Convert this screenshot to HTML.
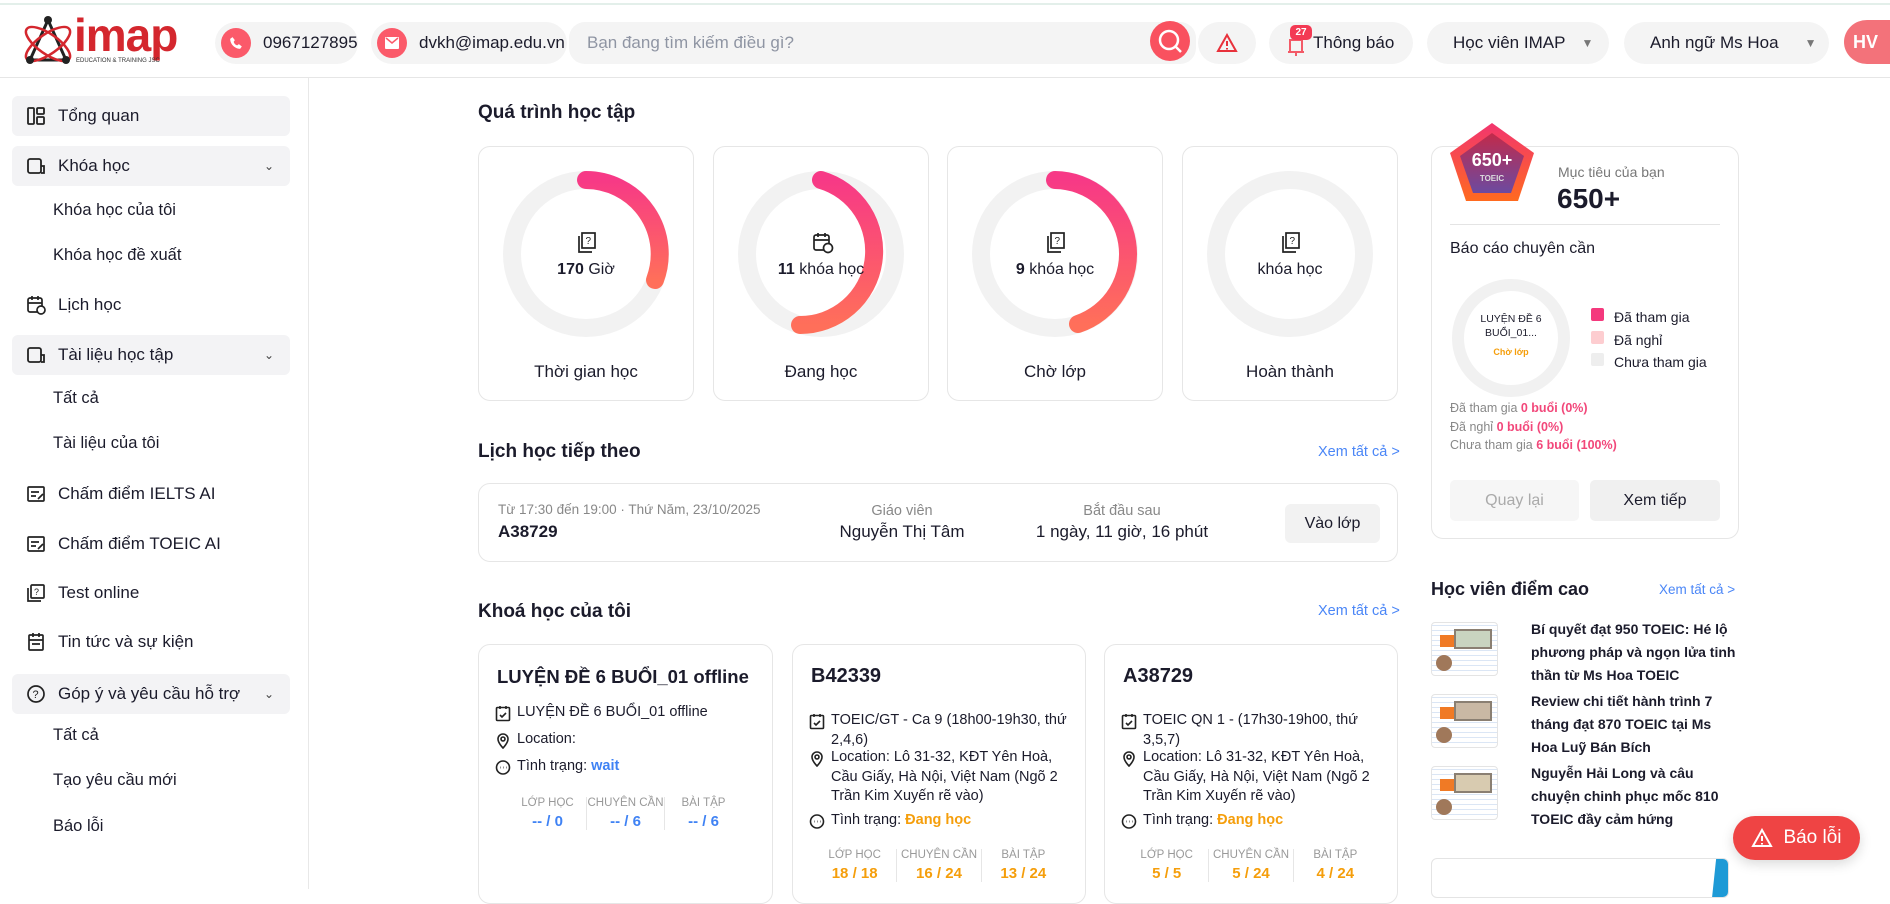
<!DOCTYPE html>
<html><head><meta charset="utf-8"><style>
*{box-sizing:border-box;margin:0;padding:0}
body{width:1890px;height:889px;overflow:hidden;background:#fff;font-family:"Liberation Sans",sans-serif;color:#1b1b2b;position:relative}
.a{position:absolute}
.pill{position:absolute;top:22px;height:42px;border-radius:21px;background:#f4f4f4;display:flex;align-items:center;font-size:17px;color:#1b1b2b}
.ic{width:30px;height:30px;border-radius:50%;background:#fb5a6a;display:flex;align-items:center;justify-content:center;margin:0 12px 0 6px}
.side{position:absolute;left:0;top:78px;width:309px;height:811px;border-right:1px solid #e8e8e8}
.si{position:absolute;left:12px;width:278px;height:40px;display:flex;align-items:center;font-size:17px;border-radius:6px}
.si.bx{background:#f3f3f5}
.si svg{margin:0 12px 0 14px}
.sub{position:absolute;left:53px;font-size:16.5px}
.chev{position:absolute;right:16px;top:13px;font-size:12px;color:#444}
h3{position:absolute;font-size:19px;font-weight:bold}
.card{position:absolute;border:1px solid #e6e6e6;border-radius:12px;background:#fff}
.more{position:absolute;color:#4a86f7;font-size:14.5px}
.lbl{position:absolute;width:100%;text-align:center;font-size:17px}
.row{position:absolute;left:16px;right:12px;display:flex;font-size:14.5px;line-height:19.5px}
.row svg{flex:none;margin-right:6px;margin-top:2px}
.st{position:absolute;display:flex;left:14px;right:14px}
.st div{flex:1;text-align:center;font-size:11.5px;color:#999;border-right:1px solid #e6e6e6;white-space:nowrap}
.st div:last-child{border:none}
.st b{display:block;font-size:15px;margin-top:4px}
.nw{position:absolute;left:1531px;font-size:14px;font-weight:bold;line-height:23px;width:205px}
.th{position:absolute;left:1431px;width:67px;height:54px;border:1px solid #e4e4e4;border-radius:4px;background:repeating-linear-gradient(0deg,#fff 0 4px,#dbe6f5 4px 5px)}
.th i{position:absolute;right:5px;top:6px;width:38px;height:20px;background:#c9d4c0;border:2px solid #8a7f72}
.th u{position:absolute;left:4px;bottom:4px;width:16px;height:16px;border-radius:50%;background:#a0785a}
.th s{position:absolute;left:8px;top:12px;width:14px;height:12px;background:#f07a25}
</style></head><body>
<div class="a" style="left:0;top:3px;width:1890px;height:2px;background:#e3efea"></div>
<div class="a" style="left:18px;top:14px;width:180px;height:56px">
<svg width="60" height="56" viewBox="0 0 60 56"><g fill="none" stroke="#222" stroke-width="3"><path d="M30 6 L12 46 L48 46 Z"/></g><g fill="none" stroke="#d4272e" stroke-width="2.5"><ellipse cx="30" cy="30" rx="26" ry="10" transform="rotate(35 30 30)"/><ellipse cx="30" cy="30" rx="26" ry="10" transform="rotate(-35 30 30)"/></g><circle cx="30" cy="6" r="4" fill="#222"/><circle cx="12" cy="46" r="4" fill="#222"/><circle cx="48" cy="46" r="4" fill="#222"/></svg>
<span class="a" style="left:56px;top:-6px;font-size:46px;font-weight:bold;color:#d4272e;letter-spacing:-1px">imap</span>
<span class="a" style="left:58px;top:44px;font-size:6px;color:#333">EDUCATION &amp; TRAINING JSC</span>
</div>
<div class="pill" style="left:215px;width:143px"><div class="ic"><svg width="14" height="14" viewBox="0 0 24 24"><path d="M6 2l4 5-2 3c1 3 3 5 6 6l3-2 5 4-3 4C10 22 2 14 2 5z" fill="#fff"/></svg></div>0967127895</div>
<div class="pill" style="left:371px;width:196px"><div class="ic"><svg width="14" height="12" viewBox="0 0 14 12"><rect x="0" y="0" width="14" height="12" rx="1" fill="#fff"/><path d="M1 1l6 5 6-5" stroke="#fb5a6a" stroke-width="1.5" fill="none"/></svg></div>dvkh@imap.edu.vn</div>
<div class="pill" style="left:569px;width:627px;color:#8f95a3;padding-left:18px;border-radius:16px">Bạn đang tìm kiếm điều gì?</div>
<div class="a" style="left:1150px;top:21px;width:40px;height:40px;border-radius:50%;background:#f9515f"><svg width="40" height="40"><circle cx="19" cy="19" r="9" stroke="#fff" stroke-width="2.5" fill="none"/><path d="M26 26l5 5" stroke="#fff" stroke-width="2.5"/></svg></div>
<div class="pill" style="left:1198px;width:58px;justify-content:center"><svg width="22" height="20" viewBox="0 0 22 20"><path d="M11 2L20 18H2Z" fill="none" stroke="#e8313b" stroke-width="2"/><path d="M11 8v5M11 15v1.5" stroke="#e8313b" stroke-width="2"/></svg></div>
<div class="pill" style="left:1269px;width:144px;padding-left:44px">Thông báo</div>
<svg class="a" style="left:1285px;top:32px" width="24" height="28"><path d="M5 8h12v12H5z M3 20h16M11 20v4" stroke="#f35a67" stroke-width="2" fill="none"/></svg>
<div class="a" style="left:1290px;top:25px;width:22px;height:15px;border-radius:5px;background:#f33a54;color:#fff;font-size:10px;font-weight:bold;text-align:center;line-height:15px">27</div>
<div class="pill" style="left:1427px;width:182px;padding-left:26px">Học viên IMAP<span style="margin-left:16px;color:#777;font-size:12px">▼</span></div>
<div class="pill" style="left:1624px;width:205px;padding-left:26px">Anh ngữ Ms Hoa<span style="margin-left:26px;color:#777;font-size:12px">▼</span></div>
<div class="a" style="left:1844px;top:20px;width:46px;height:44px;border-radius:50% 0 0 50%;background:#f3727a;color:#fff;font-weight:bold;font-size:18px;line-height:44px;padding-left:9px">HV</div>
<div class="a" style="left:0;top:77px;width:1890px;height:1px;background:#e6e6e6"></div>
<div class="side"></div>
<div class="si bx" style="top:96px"><svg width="20" height="20" viewBox="0 0 20 20" fill="none" stroke="#222" stroke-width="1.8"><rect x="2" y="2" width="6" height="16" rx="1"/><rect x="11" y="2" width="7" height="6" rx="1"/><rect x="11" y="11" width="7" height="7" rx="1"/></svg>Tổng quan</div>
<div class="si bx" style="top:146px"><svg width="20" height="20" viewBox="0 0 20 20" fill="none" stroke="#222" stroke-width="1.8"><rect x="2" y="3" width="13" height="14" rx="2"/><path d="M15 10h3v7h-3"/></svg>Khóa học<span class="chev">⌄</span></div>
<div class="sub" style="top:201px">Khóa học của tôi</div>
<div class="sub" style="top:246px">Khóa học đề xuất</div>
<div class="si" style="top:285px"><svg width="20" height="20" viewBox="0 0 20 20" fill="none" stroke="#222" stroke-width="1.7"><rect x="2" y="3" width="14" height="14" rx="2"/><path d="M2 8h14M6 1v4M12 1v4"/><circle cx="15" cy="15" r="4" fill="#fff"/></svg>Lịch học</div>
<div class="si bx" style="top:335px"><svg width="20" height="20" viewBox="0 0 20 20" fill="none" stroke="#222" stroke-width="1.8"><rect x="2" y="3" width="13" height="14" rx="2"/><path d="M15 10h3v7h-3"/></svg>Tài liệu học tập<span class="chev">⌄</span></div>
<div class="sub" style="top:389px">Tất cả</div>
<div class="sub" style="top:434px">Tài liệu của tôi</div>
<div class="si" style="top:474px"><svg width="20" height="20" viewBox="0 0 20 20" fill="none" stroke="#222" stroke-width="1.7"><rect x="2" y="3" width="16" height="14" rx="1"/><path d="M5 8h8M5 12h5M12 15l5-5"/></svg>Chấm điểm IELTS AI</div>
<div class="si" style="top:524px"><svg width="20" height="20" viewBox="0 0 20 20" fill="none" stroke="#222" stroke-width="1.7"><rect x="2" y="3" width="16" height="14" rx="1"/><path d="M5 8h8M5 12h5M12 15l5-5"/></svg>Chấm điểm TOEIC AI</div>
<div class="si" style="top:573px"><svg width="20" height="20" viewBox="0 0 20 20" fill="none" stroke="#222" stroke-width="1.7"><rect x="5" y="2" width="13" height="13" rx="1"/><path d="M2 5v13h13"/><text x="8" y="12" font-size="9" fill="#222" stroke="none">?</text></svg>Test online</div>
<div class="si" style="top:622px"><svg width="20" height="20" viewBox="0 0 20 20" fill="none" stroke="#222" stroke-width="1.7"><rect x="3" y="3" width="14" height="15" rx="1"/><path d="M3 8h14M7 1v4M13 1v4M6 12h8"/></svg>Tin tức và sự kiện</div>
<div class="si bx" style="top:674px"><svg width="20" height="20" viewBox="0 0 20 20" fill="none" stroke="#222" stroke-width="1.7"><circle cx="10" cy="10" r="8"/><text x="6.5" y="14" font-size="11" fill="#222" stroke="none">?</text></svg>Góp ý và yêu cầu hỗ trợ<span class="chev">⌄</span></div>
<div class="sub" style="top:726px">Tất cả</div>
<div class="sub" style="top:771px">Tạo yêu cầu mới</div>
<div class="sub" style="top:817px">Báo lỗi</div>
<h3 style="left:478px;top:102px">Quá trình học tập</h3>
<svg class="a" style="left:0;top:0" width="1420" height="420">
<defs><linearGradient id="g" x1="0" y1="0" x2="0" y2="1"><stop offset="0" stop-color="#f73986"/><stop offset="1" stop-color="#ff6f5a"/></linearGradient></defs>
<g fill="none" stroke-width="18">
<circle cx="586" cy="254" r="74" stroke="#f2f2f2"/><circle cx="821" cy="254" r="74" stroke="#f2f2f2"/><circle cx="1055" cy="254" r="74" stroke="#f2f2f2"/><circle cx="1290" cy="254" r="74" stroke="#f2f2f2"/>
<path d="M586 180 A74 74 0 0 1 655 280" stroke="url(#g)" stroke-linecap="round"/>
<path d="M821 180 A74 74 0 0 1 800 325" stroke="url(#g)" stroke-linecap="round"/>
<path d="M1055 180 A74 74 0 0 1 1078 324" stroke="url(#g)" stroke-linecap="round"/>
</g></svg>
<div class="card" style="left:478px;top:146px;width:216px;height:255px;background:none"><svg class="a" style="left:98px;top:85px" width="20" height="22" viewBox="0 0 20 22" fill="none" stroke="#222" stroke-width="1.7"><rect x="5" y="1" width="13" height="15"/><path d="M2 4v16h13"/><text x="8.5" y="12" font-size="10" fill="#222" stroke="none">?</text></svg><div class="lbl" style="top:114px;font-size:16px"><b>170</b> Giờ</div><div class="lbl" style="top:215px">Thời gian học</div></div>
<div class="card" style="left:713px;top:146px;width:216px;height:255px;background:none"><svg class="a" style="left:98px;top:85px" width="22" height="22" viewBox="0 0 22 22" fill="none" stroke="#222" stroke-width="1.7"><rect x="2" y="3" width="15" height="15" rx="2"/><path d="M2 8h15M6 1v4M13 1v4"/><circle cx="16" cy="16" r="4.5" fill="#fff"/></svg><div class="lbl" style="top:114px;font-size:16px"><b>11</b> khóa học</div><div class="lbl" style="top:215px">Đang học</div></div>
<div class="card" style="left:947px;top:146px;width:216px;height:255px;background:none"><svg class="a" style="left:98px;top:85px" width="20" height="22" viewBox="0 0 20 22" fill="none" stroke="#222" stroke-width="1.7"><rect x="5" y="1" width="13" height="15"/><path d="M2 4v16h13"/><text x="8.5" y="12" font-size="10" fill="#222" stroke="none">?</text></svg><div class="lbl" style="top:114px;font-size:16px"><b>9</b> khóa học</div><div class="lbl" style="top:215px">Chờ lớp</div></div>
<div class="card" style="left:1182px;top:146px;width:216px;height:255px;background:none"><svg class="a" style="left:98px;top:85px" width="20" height="22" viewBox="0 0 20 22" fill="none" stroke="#222" stroke-width="1.7"><rect x="5" y="1" width="13" height="15"/><path d="M2 4v16h13"/><text x="8.5" y="12" font-size="10" fill="#222" stroke="none">?</text></svg><div class="lbl" style="top:114px;font-size:16px">khóa học</div><div class="lbl" style="top:215px">Hoàn thành</div></div>
<h3 style="left:478px;top:441px">Lịch học tiếp theo</h3>
<div class="more" style="left:1318px;top:444px">Xem tất cả &gt;</div>
<div class="card" style="left:478px;top:483px;width:920px;height:79px">
<div class="a" style="left:19px;top:18px;font-size:13.5px;color:#888">Từ 17:30 đến 19:00 · Thứ Năm, 23/10/2025</div>
<div class="a" style="left:19px;top:38px;font-size:17px;font-weight:bold">A38729</div>
<div class="a" style="left:323px;width:200px;text-align:center;top:19px;font-size:14.5px;color:#888">Giáo viên</div>
<div class="a" style="left:323px;width:200px;text-align:center;top:38px;font-size:17px">Nguyễn Thị Tâm</div>
<div class="a" style="left:543px;width:200px;text-align:center;top:19px;font-size:14.5px;color:#888">Bắt đầu sau</div>
<div class="a" style="left:523px;width:240px;text-align:center;top:38px;font-size:17px">1 ngày, 11 giờ, 16 phút</div>
<div class="a" style="left:806px;top:20px;width:95px;height:39px;border-radius:6px;background:#f2f2f2;text-align:center;line-height:39px;font-size:16px">Vào lớp</div>
</div>
<h3 style="left:478px;top:601px">Khoá học của tôi</h3>
<div class="more" style="left:1318px;top:603px">Xem tất cả &gt;</div>
<div class="card" style="left:478px;top:644px;width:295px;height:260px">
<div class="a" style="left:18px;top:21px;font-size:18.5px;font-weight:bold;white-space:nowrap">LUYỆN ĐỀ 6 BUỔI_01 offline</div>
<div class="row" style="top:58px"><svg width="16" height="17" viewBox="0 0 16 17" fill="none" stroke="#222" stroke-width="1.6"><rect x="1.5" y="2.5" width="13" height="13" rx="1"/><path d="M5 1v3M11 1v3M5 10l2 2 4-4"/></svg>LUYỆN ĐỀ 6 BUỔI_01 offline</div>
<div class="row" style="top:85px"><svg width="16" height="17" viewBox="0 0 16 17" fill="none" stroke="#222" stroke-width="1.6"><path d="M8 16s5-5 5-9A5 5 0 0 0 3 7c0 4 5 9 5 9z"/><circle cx="8" cy="7" r="2"/></svg>Location:</div>
<div class="row" style="top:112px"><svg width="16" height="17" viewBox="0 0 16 17" fill="none" stroke="#222" stroke-width="1.6"><circle cx="8" cy="8.5" r="6.5"/><path d="M5 8.5h.5M8 8.5h.5M11 8.5h.5" stroke-width="2"/></svg>Tình trạng:&nbsp;<b style="color:#3f82f4">wait</b></div>
<div class="st" style="top:152px;left:30px;right:30px"><div>LỚP HỌC<b style="color:#3f82f4">-- / 0</b></div><div>CHUYÊN CẦN<b style="color:#3f82f4">-- / 6</b></div><div>BÀI TẬP<b style="color:#3f82f4">-- / 6</b></div></div>
</div>
<div class="card" style="left:792px;top:644px;width:294px;height:260px">
<div class="a" style="left:18px;top:20px;font-size:20px;font-weight:bold">B42339</div>
<div class="row" style="top:66px"><svg width="16" height="17" viewBox="0 0 16 17" fill="none" stroke="#222" stroke-width="1.6"><rect x="1.5" y="2.5" width="13" height="13" rx="1"/><path d="M5 1v3M11 1v3M5 10l2 2 4-4"/></svg><span>TOEIC/GT - Ca 9 (18h00-19h30, thứ 2,4,6)</span></div>
<div class="row" style="top:103px"><svg width="16" height="17" viewBox="0 0 16 17" fill="none" stroke="#222" stroke-width="1.6"><path d="M8 16s5-5 5-9A5 5 0 0 0 3 7c0 4 5 9 5 9z"/><circle cx="8" cy="7" r="2"/></svg><span>Location: Lô 31-32, KĐT Yên Hoà, Cầu Giấy, Hà Nội, Việt Nam (Ngõ 2 Trần Kim Xuyến rẽ vào)</span></div>
<div class="row" style="top:166px"><svg width="16" height="17" viewBox="0 0 16 17" fill="none" stroke="#222" stroke-width="1.6"><circle cx="8" cy="8.5" r="6.5"/><path d="M5 8.5h.5M8 8.5h.5M11 8.5h.5" stroke-width="2"/></svg>Tình trạng:&nbsp;<b style="color:#f59e0b">Đang học</b></div>
<div class="st" style="top:204px;left:20px;right:20px"><div>LỚP HỌC<b style="color:#f59e0b">18 / 18</b></div><div>CHUYÊN CẦN<b style="color:#f59e0b">16 / 24</b></div><div>BÀI TẬP<b style="color:#f59e0b">13 / 24</b></div></div>
</div>
<div class="card" style="left:1104px;top:644px;width:294px;height:260px">
<div class="a" style="left:18px;top:20px;font-size:20px;font-weight:bold">A38729</div>
<div class="row" style="top:66px"><svg width="16" height="17" viewBox="0 0 16 17" fill="none" stroke="#222" stroke-width="1.6"><rect x="1.5" y="2.5" width="13" height="13" rx="1"/><path d="M5 1v3M11 1v3M5 10l2 2 4-4"/></svg><span>TOEIC QN 1 - (17h30-19h00, thứ 3,5,7)</span></div>
<div class="row" style="top:103px"><svg width="16" height="17" viewBox="0 0 16 17" fill="none" stroke="#222" stroke-width="1.6"><path d="M8 16s5-5 5-9A5 5 0 0 0 3 7c0 4 5 9 5 9z"/><circle cx="8" cy="7" r="2"/></svg><span>Location: Lô 31-32, KĐT Yên Hoà, Cầu Giấy, Hà Nội, Việt Nam (Ngõ 2 Trần Kim Xuyến rẽ vào)</span></div>
<div class="row" style="top:166px"><svg width="16" height="17" viewBox="0 0 16 17" fill="none" stroke="#222" stroke-width="1.6"><circle cx="8" cy="8.5" r="6.5"/><path d="M5 8.5h.5M8 8.5h.5M11 8.5h.5" stroke-width="2"/></svg>Tình trạng:&nbsp;<b style="color:#f59e0b">Đang học</b></div>
<div class="st" style="top:204px;left:20px;right:20px"><div>LỚP HỌC<b style="color:#f59e0b">5 / 5</b></div><div>CHUYÊN CẦN<b style="color:#f59e0b">5 / 24</b></div><div>BÀI TẬP<b style="color:#f59e0b">4 / 24</b></div></div>
</div>
<div class="card" style="left:1431px;top:146px;width:308px;height:393px"></div>
<svg class="a" style="left:1448px;top:121px" width="88" height="82" viewBox="0 0 88 82"><defs><linearGradient id="p" x1="0" y1="0" x2="0" y2="1"><stop offset="0" stop-color="#f2356f"/><stop offset="1" stop-color="#ff6a1f"/></linearGradient><linearGradient id="q" x1="0" y1="0" x2="0" y2="1"><stop offset="0" stop-color="#c22a4a"/><stop offset="1" stop-color="#6c4aa0"/></linearGradient></defs><path d="M44 2L86 32 70 80H18L2 32Z" fill="url(#p)"/><path d="M44 12L76 35 63 72H25L12 35Z" fill="url(#q)"/><text x="44" y="45" text-anchor="middle" font-family="Liberation Sans" font-weight="bold" font-size="18" fill="#fff">650+</text><text x="44" y="60" text-anchor="middle" font-family="Liberation Sans" font-weight="bold" font-size="8" fill="#ddd">TOEIC</text></svg>
<div class="a" style="left:1558px;top:164px;font-size:14px;color:#777">Mục tiêu của bạn</div>
<div class="a" style="left:1557px;top:183px;font-size:28px;font-weight:bold">650+</div>
<div class="a" style="left:1450px;top:224px;width:270px;height:1px;background:#e4e4e4"></div>
<div class="a" style="left:1450px;top:240px;font-size:16px">Báo cáo chuyên cần</div>
<div class="a" style="left:1452px;top:279px;width:118px;height:118px;border-radius:50%;border:12px solid #f1f1f1"></div>
<div class="a" style="left:1470px;top:312px;width:82px;text-align:center;font-size:10.5px;line-height:14px">LUYỆN ĐỀ 6<br>BUỔI_01...</div>
<div class="a" style="left:1470px;top:347px;width:82px;text-align:center;font-size:9px;color:#f59e0b;font-weight:bold">Chờ lớp</div>
<div class="a" style="left:1591px;top:308px;width:13px;height:13px;border-radius:2px;background:#f4397d"></div>
<div class="a" style="left:1591px;top:331px;width:13px;height:13px;border-radius:2px;background:#fdcdd0"></div>
<div class="a" style="left:1591px;top:353px;width:13px;height:13px;border-radius:2px;background:#eeeeee"></div>
<div class="a" style="left:1614px;top:306px;font-size:14px;line-height:22.5px">Đã tham gia<br>Đã nghỉ<br>Chưa tham gia</div>
<div class="a" style="left:1450px;top:399px;font-size:12.5px;color:#888;line-height:18.5px">Đã tham gia <b style="color:#f2477a">0 buổi (0%)</b><br>Đã nghỉ <b style="color:#f2477a">0 buổi (0%)</b><br>Chưa tham gia <b style="color:#f2477a">6 buổi (100%)</b></div>
<div class="a" style="left:1450px;top:480px;width:129px;height:41px;border-radius:5px;background:#f6f6f6;color:#aaa;font-size:16px;text-align:center;line-height:41px">Quay lại</div>
<div class="a" style="left:1590px;top:480px;width:130px;height:41px;border-radius:5px;background:#f0f0f0;font-size:16px;text-align:center;line-height:41px">Xem tiếp</div>
<h3 style="left:1431px;top:579px;font-size:18px">Học viên điểm cao</h3>
<div class="more" style="left:1659px;top:582px;font-size:13.5px">Xem tất cả &gt;</div>
<div class="th" style="top:622px"><i></i><s></s><u></u></div>
<div class="nw" style="top:618px">Bí quyết đạt 950 TOEIC: Hé lộ phương pháp và ngọn lửa tinh thần từ Ms Hoa TOEIC</div>
<div class="th" style="top:694px"><i style="background:#c9b8a4"></i><s></s><u></u></div>
<div class="nw" style="top:690px">Review chi tiết hành trình 7 tháng đạt 870 TOEIC tại Ms Hoa Luỹ Bán Bích</div>
<div class="th" style="top:766px"><i style="background:#d8cbb0"></i><s></s><u></u></div>
<div class="nw" style="top:762px">Nguyễn Hải Long và câu chuyện chinh phục mốc 810 TOEIC đầy cảm hứng</div>
<div class="a" style="left:1431px;top:858px;width:298px;height:40px;border:1px solid #e4e4e4;border-radius:6px;overflow:hidden"><div class="a" style="right:-4px;top:0;width:18px;height:40px;background:#1e9ad6;transform:skewX(-6deg)"></div></div>
<div class="a" style="left:1733px;top:816px;width:127px;height:44px;border-radius:22px;background:#ef4444;color:#fff;font-size:19px;display:flex;align-items:center;justify-content:center;box-shadow:0 4px 12px rgba(0,0,0,.15)"><svg width="22" height="20" viewBox="0 0 22 20" style="margin-right:10px"><path d="M11 2L20 18H2Z" fill="none" stroke="#fff" stroke-width="2"/><path d="M11 8v5M11 15v1.5" stroke="#fff" stroke-width="2"/></svg>Báo lỗi</div>
</body></html>
